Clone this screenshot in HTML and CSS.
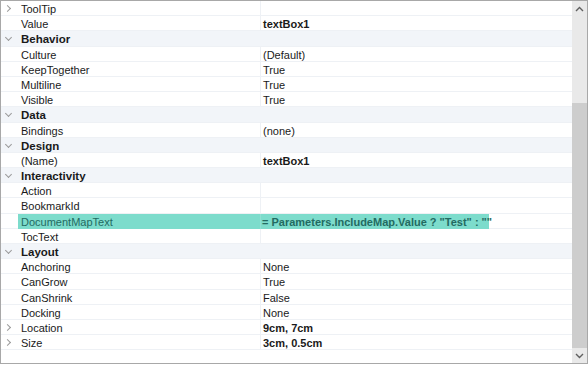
FILE: index.html
```html
<!DOCTYPE HTML>
<html lang="en">
<head>
  <meta name="viewport" content="width=device-width, initial-scale=1">
  <title>Properties</title>
  <link rel="stylesheet" href="styles.css">
</head>
<body>
  <div class="grid">
    <div class="rows">
      <div class="row"><span class="toggle closed"></span><span class="name">ToolTip</span><span class="value"></span></div>
      <div class="row"><span class="toggle"></span><span class="name">Value</span><span class="value bold">textBox1</span></div>

      <div class="row category"><span class="toggle open"></span><span class="name">Behavior</span><span class="value"></span></div>
      <div class="row"><span class="toggle"></span><span class="name">Culture</span><span class="value">(Default)</span></div>
      <div class="row"><span class="toggle"></span><span class="name">KeepTogether</span><span class="value">True</span></div>
      <div class="row"><span class="toggle"></span><span class="name">Multiline</span><span class="value">True</span></div>
      <div class="row"><span class="toggle"></span><span class="name">Visible</span><span class="value">True</span></div>

      <div class="row category"><span class="toggle open"></span><span class="name">Data</span><span class="value"></span></div>
      <div class="row"><span class="toggle"></span><span class="name">Bindings</span><span class="value">(none)</span></div>

      <div class="row category"><span class="toggle open"></span><span class="name">Design</span><span class="value"></span></div>
      <div class="row"><span class="toggle"></span><span class="name">(Name)</span><span class="value bold">textBox1</span></div>

      <div class="row category"><span class="toggle open"></span><span class="name">Interactivity</span><span class="value"></span></div>
      <div class="row"><span class="toggle"></span><span class="name">Action</span><span class="value"></span></div>
      <div class="row"><span class="toggle"></span><span class="name">BookmarkId</span><span class="value"></span></div>
      <div class="row selected"><span class="toggle"></span><span class="name">DocumentMapText</span><span class="value bold"><span class="editor">= Parameters.IncludeMap.Value ? "Test" : ""</span></span></div>
      <div class="row"><span class="toggle"></span><span class="name">TocText</span><span class="value"></span></div>

      <div class="row category"><span class="toggle open"></span><span class="name">Layout</span><span class="value"></span></div>
      <div class="row"><span class="toggle"></span><span class="name">Anchoring</span><span class="value">None</span></div>
      <div class="row"><span class="toggle"></span><span class="name">CanGrow</span><span class="value">True</span></div>
      <div class="row"><span class="toggle"></span><span class="name">CanShrink</span><span class="value">False</span></div>
      <div class="row"><span class="toggle"></span><span class="name">Docking</span><span class="value">None</span></div>
      <div class="row"><span class="toggle closed"></span><span class="name">Location</span><span class="value bold">9cm, 7cm</span></div>
      <div class="row"><span class="toggle closed"></span><span class="name">Size</span><span class="value bold">3cm, 0.5cm</span></div>
    </div>

    <div class="scrollbar">
      <div class="arrow">
        <svg width="9" height="6" viewBox="0 0 9 6"><path d="M1 5 L4.5 1.5 L8 5" fill="none" stroke="#606060" stroke-width="1.4"/></svg>
      </div>
      <div class="track"><div class="thumb"></div></div>
      <div class="arrow">
        <svg width="9" height="6" viewBox="0 0 9 6"><path d="M1 1 L4.5 4.5 L8 1" fill="none" stroke="#606060" stroke-width="1.4"/></svg>
      </div>
    </div>
  </div>
</body>
</html>
```

FILE: styles.css
```css
/* Property grid */
body {
  margin: 0;
  background: #ffffff;
  font-family: 'Liberation Sans', Arial, sans-serif;
  font-size: 11px;
  color: #1a1a1a;
}

.grid {
  display: flex;
  width: 588px;
  height: 364px;
  box-sizing: border-box;
  border: 1px solid #a8a8a8;
  background: #ffffff;
}

.rows {
  flex: 1;
}

.row {
  display: grid;
  grid-template-columns: 17px 242px 1fr;
  height: 15.2px;
  box-sizing: border-box;
  border-bottom: 1px solid #eef1f5;
  line-height: 14px;
}

.row .name {
  padding-left: 3px;
  padding-top: 1px;
  white-space: nowrap;
}

.row .value {
  padding-left: 2px;
  padding-top: 1px;
  border-left: 1px solid #eef1f5;
  white-space: nowrap;
}

.bold {
  font-weight: bold;
}

/* Category headers */
.category {
  background: #f2f5f9;
}

.category .name {
  font-weight: bold;
  font-size: 11.5px;
}

.category .value {
  border-left-color: transparent;
}

/* Expand / collapse glyphs */
.toggle {
  position: relative;
}

.toggle.closed::before,
.toggle.open::before {
  content: '';
  position: absolute;
  width: 4px;
  height: 4px;
  border-right: 1px solid #9a9a9a;
  border-bottom: 1px solid #9a9a9a;
}

.toggle.closed::before {
  left: 4px;
  top: 5px;
  transform: rotate(-45deg);
}

.toggle.open::before {
  left: 5px;
  top: 4px;
  transform: rotate(45deg);
}

/* Selected row */
.selected .name {
  background: #7ddccc;
  color: #236b62;
}

.selected .value {
  padding-left: 0;
  padding-top: 0;
  border-left-color: #8fe0d2;
}

.selected .editor {
  display: block;
  box-sizing: border-box;
  width: 228px;
  height: 100%;
  padding-left: 1px;
  padding-top: 1px;
  background: #7ddccc;
  color: #236b62;
}

/* Scrollbar */
.scrollbar {
  width: 15px;
  background: #e9e9e9;
  display: flex;
  flex-direction: column;
}

.arrow {
  height: 15px;
  display: flex;
  align-items: center;
  justify-content: center;
}

.track {
  flex: 1;
  display: flex;
  flex-direction: column;
  justify-content: flex-end;
}

.thumb {
  height: 245px;
  background: #cdcdcd;
}
```
